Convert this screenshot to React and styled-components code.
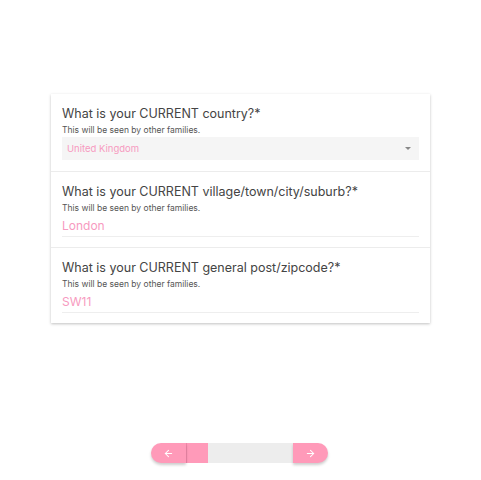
import React from 'react';
import styled, { createGlobalStyle } from 'styled-components';

const GlobalStyle = createGlobalStyle`
  body {
    margin: 0;
    background: #fff;
    font-family: Inter, "Open Sans", sans-serif;
  }
`;

const Page = styled.div`
  width: 481px;
  height: 480px;
  display: flex;
  flex-direction: column;
  align-items: center;
  padding-top: 94px;
  box-sizing: border-box;
`;

const Card = styled.div`
  width: 379px;
  display: flex;
  flex-direction: column;
  gap: 1px;
  background: #ececec;
  box-shadow: 0 1px 3px rgba(0, 0, 0, 0.18), 0 1px 2px rgba(0, 0, 0, 0.08);
`;

const Section = styled.div`
  background: #fff;
  padding: ${(p) => p.top}px 11px 0 11px;
  height: ${(p) => p.h}px;
  box-sizing: border-box;
`;

const Title = styled.div`
  font-size: 12.5px;
  color: #444;
  line-height: 16px;
`;

const Hint = styled.div`
  font-size: 8.5px;
  color: #555;
  margin-top: 2px;
  line-height: 12px;
`;

const Select = styled.div`
  margin-top: 1px;
  height: 23px;
  background: #f5f5f5;
  display: flex;
  align-items: center;
  justify-content: space-between;
  padding: 0 8px 0 5px;
  font-size: 9.5px;
  color: #f79ac0;
`;

const Caret = styled.span`
  width: 0;
  height: 0;
  border-left: 3px solid transparent;
  border-right: 3px solid transparent;
  border-top: 3px solid #888;
`;

const Value = styled.div`
  margin-top: 4px;
  font-size: 12px;
  color: #f79ac0;
  line-height: 16px;
  padding-bottom: 2px;
  border-bottom: 1px solid #eee;
`;

const Footer = styled.div`
  margin-top: auto;
  margin-bottom: 17px;
  margin-right: 2px;
  display: flex;
  width: 177px;
  height: 20px;
`;

const NavButton = styled.button`
  width: 35px;
  height: 20px;
  border: none;
  padding: 0;
  background: #ff9ab9;
  color: #fff;
  display: flex;
  align-items: center;
  justify-content: center;
  border-radius: ${(p) => (p.left ? '10px 0 0 10px' : '0 10px 10px 0')};
  box-shadow: 0 2px 3px rgba(0, 0, 0, 0.2);
  position: relative;
  z-index: 1;
`;

const Track = styled.div`
  flex: 1;
  background: #ededed;
  display: flex;
`;

const Fill = styled.div`
  width: 21px;
  background: #ff9ab9;
  border-left: 1px solid #f089aa;
`;

const Arrow = ({ dir }) => (
  <svg width="11" height="11" viewBox="0 0 24 24" fill="none" stroke="#fff" strokeWidth="2.2" strokeLinecap="round" strokeLinejoin="round">
    {dir === 'left' ? (
      <>
        <path d="M19 12H5" />
        <path d="M12 19l-7-7 7-7" />
      </>
    ) : (
      <>
        <path d="M5 12h14" />
        <path d="M12 5l7 7-7 7" />
      </>
    )}
  </svg>
);

const hint = 'This will be seen by other families.';

export default function App() {
  return (
    <>
      <GlobalStyle />
      <Page>
        <Card>
          <Section h={77} top={12}>
            <Title>What is your CURRENT country?*</Title>
            <Hint>{hint}</Hint>
            <Select>
              United Kingdom
              <Caret />
            </Select>
          </Section>
          <Section h={75} top={12}>
            <Title>What is your CURRENT village/town/city/suburb?*</Title>
            <Hint>{hint}</Hint>
            <Value>London</Value>
          </Section>
          <Section h={75} top={12}>
            <Title>What is your CURRENT general post/zipcode?*</Title>
            <Hint>{hint}</Hint>
            <Value>SW11</Value>
          </Section>
        </Card>
        <Footer>
          <NavButton left>
            <Arrow dir="left" />
          </NavButton>
          <Track>
            <Fill />
          </Track>
          <NavButton>
            <Arrow dir="right" />
          </NavButton>
        </Footer>
      </Page>
    </>
  );
}
